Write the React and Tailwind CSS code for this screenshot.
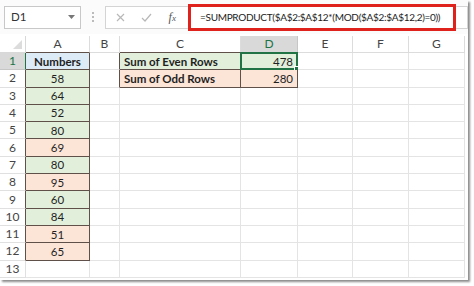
import React from 'react';

const cols = [
  { key: 'A', w: 64 },
  { key: 'B', w: 30 },
  { key: 'C', w: 121 },
  { key: 'D', w: 57 },
  { key: 'E', w: 55 },
  { key: 'F', w: 56 },
  { key: 'G', w: 56 },
];

const numbers = [58, 64, 52, 80, 69, 80, 95, 60, 84, 51, 65];

const GREEN = 'bg-[#e2efda]';
const PEACH = 'bg-[#fce4d6]';
const LINE = 'border-[#5f5149]';

function Cell({ className = '', children }) {
  return (
    <div className={'relative flex items-center border-r border-b px-1 whitespace-nowrap ' + className}>
      {children}
    </div>
  );
}

function FormulaBar() {
  return (
    <div className="flex h-[34px] items-center bg-[#fbfbfb]">
      <div className="ml-[4px] flex h-[23px] w-[77px] items-center justify-between border border-[#c8c8c8] bg-white pl-[6px] pr-[5px] text-[11.5px] text-[#333]">
        <span>D1</span>
        <svg width="7" height="4" viewBox="0 0 7 4"><path d="M0 0h7L3.5 4z" fill="#777" /></svg>
      </div>
      <div className="flex w-[24px] flex-col items-center gap-[2px]">
        <span className="h-[2px] w-[2px] bg-[#bbb]" />
        <span className="h-[2px] w-[2px] bg-[#bbb]" />
        <span className="h-[2px] w-[2px] bg-[#bbb]" />
      </div>
      <div className="flex h-[23px] flex-1 items-center border border-[#d4d4d4] bg-white">
        <div className="flex w-[82px] items-center justify-around pl-[2px] pr-[4px]">
          <svg width="9" height="9" viewBox="0 0 9 9"><path d="M1 1l7 7M8 1L1 8" stroke="#b8b8b8" strokeWidth="1.2" /></svg>
          <svg width="11" height="9" viewBox="0 0 11 9"><path d="M1 5l3 3 6-7" stroke="#b8b8b8" strokeWidth="1.2" fill="none" /></svg>
          <span className="font-['Liberation_Serif',serif] text-[12px] italic text-[#555]">f<span className="text-[9px]">x</span></span>
        </div>
        <div className="-my-[2px] flex h-[27px] w-[268px] items-center overflow-hidden whitespace-nowrap border-[3px] border-[#e0221c] pl-[9px] text-[10px] tracking-[-0.3px] text-[#222]">
          =SUMPRODUCT($A$2:$A$12*(MOD($A$2:$A$12,2)=0))
        </div>
      </div>
    </div>
  );
}

export default function App() {
  const rows = Array.from({ length: 13 }, (_, i) => i + 1);

  const dataCell = (col, r) => {
    if (col === 'A') {
      if (r === 1) return { cls: 'bg-[#ddebf7] justify-center font-bold ' + LINE, text: 'Numbers' };
      if (r <= 12) {
        const n = numbers[r - 2];
        return { cls: (n % 2 === 0 ? GREEN : PEACH) + ' justify-center ' + LINE, text: n };
      }
    }
    if (col === 'B' && r <= 2) return { cls: 'border-r-[#5f5149] border-b-[#e4e4e4]', text: '' };
    if (col === 'C' && r === 1) return { cls: GREEN + ' font-bold ' + LINE, text: 'Sum of Even Rows' };
    if (col === 'C' && r === 2) return { cls: PEACH + ' font-bold ' + LINE, text: 'Sum of Odd Rows' };
    if (col === 'D' && r === 1) return { cls: GREEN + ' justify-end ' + LINE, text: '478', sel: true };
    if (col === 'D' && r === 2) return { cls: PEACH + ' justify-end ' + LINE, text: '280' };
    return { cls: 'border-[#e4e4e4]', text: '' };
  };

  return (
    <div className="h-[286px] w-[474px] bg-white font-['Lato',sans-serif]">
      <div className="h-[280px] w-[468px] overflow-hidden bg-white shadow-[2px_2px_2px_rgba(0,0,0,0.45)]">
        <FormulaBar />
        <div
          className="mt-[2px] grid text-[11.5px] text-[#1f1f1f]"
          style={{ gridTemplateColumns: `26px ${cols.map((c) => c.w + 'px').join(' ')}`, gridTemplateRows: `17px repeat(13, 17.3px)` }}
        >
          <div className="flex items-end justify-end border-r border-b border-[#d8d8d8] p-[3px]">
            <svg width="9" height="9" viewBox="0 0 9 9"><path d="M9 0V9H0z" fill="#dcdcdc" /></svg>
          </div>
          {cols.map((c) => (
            <div
              key={c.key}
              className={
                'flex items-center justify-center border-r border-b text-[12px] ' +
                (c.key === 'D'
                  ? 'bg-[#d9d9d9] border-r-[#c6c6c6] border-b-[#217346] text-[#217346]'
                  : c.key === 'A' || c.key === 'C'
                  ? 'border-r-[#dcdcdc] border-b-[#5f5149] text-[#444]'
                  : 'border-r-[#dcdcdc] border-b-[#dcdcdc] text-[#444]')
              }
            >
              {c.key}
            </div>
          ))}
          {rows.map((r) => (
            <React.Fragment key={r}>
              <div
                className={
                  'flex items-center justify-center border-r border-b text-[12px] ' +
                  (r === 1
                    ? 'bg-[#d9d9d9] border-r-[#217346] border-b-[#c6c6c6] text-[#217346]'
                    : r <= 12
                    ? 'border-r-[#5f5149] border-b-[#e0e0e0] text-[#444]'
                    : 'border-r-[#e0e0e0] border-b-[#e0e0e0] text-[#444]')
                }
              >
                {r}
              </div>
              {cols.map((c) => {
                const d = dataCell(c.key, r);
                return (
                  <Cell key={c.key} className={d.cls}>
                    {d.text}
                    {d.sel && (
                      <div className="absolute -top-[1px] -left-[1px] -right-[1px] -bottom-[1px] border-2 border-[#217346]">
                        <span className="absolute -right-[3px] -bottom-[3px] h-[5px] w-[5px] border border-white bg-[#217346]" />
                      </div>
                    )}
                  </Cell>
                );
              })}
            </React.Fragment>
          ))}
        </div>
      </div>
    </div>
  );
}
